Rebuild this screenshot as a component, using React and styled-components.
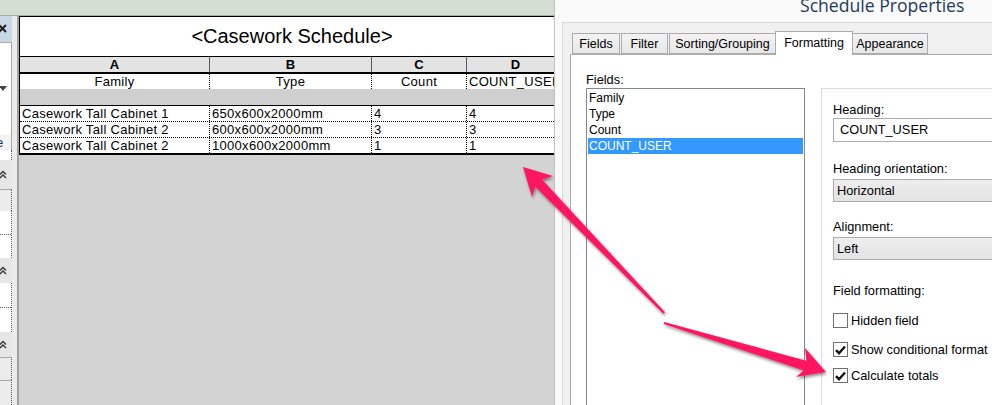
import React from 'react';
import styled, { createGlobalStyle, css } from 'styled-components';

const GlobalStyle = createGlobalStyle`
  html, body {
    margin: 0;
    padding: 0;
    background: #fafafa;
    overflow: hidden;
  }
  * {
    box-sizing: border-box;
  }
`;

const Screen = styled.div`
  position: relative;
  display: flex;
  width: 992px;
  height: 405px;
  overflow: hidden;
  font-family: 'Liberation Sans', Arial, sans-serif;
  color: #000;
`;

/* ---------- left: the schedule view ---------- */

const ViewPane = styled.div`
  display: flex;
  flex-direction: column;
  width: 555px;
  flex-shrink: 0;
  border-right: 1px solid #c2c2c2;
  background: #d3d3d3;
  overflow: hidden;
`;

const TopBand = styled.div`
  height: 16px;
  flex-shrink: 0;
  background: #d5dfd1;
  border-bottom: 1px solid #a6ada3;
`;

const ViewBody = styled.div`
  display: flex;
  flex: 1;
  min-height: 0;
`;

const SideStrip = styled.div`
  display: flex;
  width: 19px;
  flex-shrink: 0;
  background: #ebebeb;
  border-right: 2px solid #a3a3a3;
`;

const Palette = styled.div`
  display: flex;
  flex-direction: column;
  width: 12px;
  overflow: hidden;
`;

const tones = {
  blue: css`
    background: #c9d8e7;
  `,
  plain: css`
    background: #fff;
    border-top: 1px solid #a9a9a9;
    border-right: 1px solid #a9a9a9;
  `,
  light: css`
    background: #f3f3f3;
    border-right: 1px solid #a9a9a9;
  `,
  white: css`
    background: #fff;
    border-right: 1px dotted #5a5a5a;
  `,
  head: css`
    background: #e6e6e6;
  `,
  button: css`
    background: #ececec;
    border-top: 1px solid #a8a8a8;
    border-right: 1px dotted #5a5a5a;
  `,
};

const PaletteBlock = styled.div`
  display: flex;
  flex-direction: column;
  justify-content: ${(p) => p.$justify || 'center'};
  height: ${(p) => p.$h}px;
  flex-shrink: 0;
  ${(p) => tones[p.$tone]}
`;

const Half = styled.div`
  flex: 1;
  & + & {
    border-top: 1px dotted #5a5a5a;
  }
`;

const Frag = styled.span`
  margin-left: -4px;
  font-size: 13px;
  line-height: 13px;
  color: #1b2f5a;
`;

const Schedule = styled.div`
  flex: 1;
  display: flex;
  flex-direction: column;
  background: #d3d3d3;
  overflow: hidden;
`;

const SchedTable = styled.div`
  width: 545px;
  background: #fff;
  border-left: 1px solid #000;
`;

const SchedTitle = styled.div`
  height: 41px;
  display: flex;
  align-items: center;
  justify-content: center;
  border-top: 1px solid #000;
  border-bottom: 1px solid #000;
  font-size: 20px;
`;

const SchedRow = styled.div`
  display: grid;
  grid-template-columns: 190px 162px 95px 98px;
  height: ${(p) => p.$h}px;
  background: ${(p) => p.$bg || '#fff'};
  border-bottom: ${(p) => p.$rule || 'none'};
`;

const Cell = styled.div`
  border-right: ${(p) => p.$sep || 'none'};
  padding: 0 2px;
  line-height: 15px;
  font-size: 13px;
  font-weight: ${(p) => (p.$bold ? 700 : 400)};
  letter-spacing: ${(p) => (p.$bold ? 0 : 0.3)}px;
  text-align: ${(p) => p.$align || 'left'};
  white-space: nowrap;
  overflow: hidden;
`;

/* ---------- right: Schedule Properties dialog ---------- */

const Dialog = styled.div`
  flex: 1;
  min-width: 0;
  display: flex;
  flex-direction: column;
  background: #fafafa;
  overflow: hidden;
`;

const TitleBar = styled.div`
  height: 22px;
  flex-shrink: 0;
  padding-left: 245px;
  overflow: hidden;
`;

const Title = styled.div`
  margin-top: -3px;
  font-family: 'Open Sans', sans-serif;
  font-size: 17.6px;
  line-height: 17px;
  color: #1d3a5c;
  white-space: nowrap;
`;

const Client = styled.div`
  flex: 1;
  display: flex;
  flex-direction: column;
  margin-left: 7px;
  padding: 8px 0 0 7px;
  background: #f0f0f0;
  border-top: 1px solid #d9d9d9;
  border-left: 1px solid #d9d9d9;
`;

const TabStrip = styled.div`
  position: relative;
  z-index: 1;
  display: flex;
  align-items: flex-end;
  gap: 1px;
  height: 23px;
  flex-shrink: 0;
  padding-left: 2px;
`;

const Tab = styled.div`
  width: ${(p) => p.$w}px;
  height: ${(p) => (p.$active ? 24 : 21)}px;
  margin: ${(p) => (p.$active ? '0 -2px -1px -2px' : '0')};
  display: flex;
  align-items: center;
  justify-content: center;
  padding-bottom: ${(p) => (p.$active ? 2 : 0)}px;
  border: 1px solid #acacac;
  border-bottom: ${(p) => (p.$active ? 'none' : '1px solid #acacac')};
  background: ${(p) =>
    p.$active ? '#fff' : 'linear-gradient(#f3f3f3, #e7e7e7)'};
  font-size: 12.5px;
  white-space: nowrap;
`;

const TabPanel = styled.div`
  flex: 1;
  display: grid;
  grid-template-columns: 219px 240px;
  grid-template-rows: auto 1fr;
  column-gap: 16px;
  padding: 17px 0 0 15px;
  background: #fff;
  border-top: 1px solid #acacac;
  border-left: 1px solid #acacac;
`;

const Label = styled.div`
  margin-top: ${(p) => p.$mt || 0}px;
  font-size: 12.8px;
  line-height: 15px;
  white-space: nowrap;
`;

const FieldList = styled.div`
  grid-column: 1;
  grid-row: 2;
  height: 330px;
  margin-top: 1px;
  padding: 1px;
  border: 1px solid #828790;
`;

const FieldItem = styled.div`
  height: 16px;
  padding-left: 1px;
  line-height: 16px;
  font-size: 12px;
  background: ${(p) => (p.$selected ? '#3399ff' : 'transparent')};
  color: ${(p) => (p.$selected ? '#fff' : '#000')};
`;

const Group = styled.div`
  grid-column: 2;
  grid-row: 2;
  display: flex;
  flex-direction: column;
  margin-top: 1px;
  padding: 13px 0 0 11px;
  border: 1px solid #dcdcdc;
`;

const TextBox = styled.div`
  height: 24px;
  margin-top: 1px;
  padding-left: 6px;
  line-height: 22px;
  font-size: 12.8px;
  border: 1px solid #abadb3;
  background: #fff;
`;

const Select = styled.div`
  height: 23px;
  margin-top: 3px;
  padding-left: 3px;
  line-height: 21px;
  font-size: 12.8px;
  border: 1px solid #acacac;
  background: linear-gradient(#eeeeee, #e3e3e3);
`;

const CheckRow = styled.div`
  display: flex;
  align-items: center;
  gap: 3px;
  margin-top: ${(p) => p.$mt}px;
  font-size: 12.8px;
  line-height: 15px;
  white-space: nowrap;
`;

const Box = styled.div`
  width: 15px;
  height: 15px;
  flex-shrink: 0;
  display: flex;
  align-items: center;
  justify-content: center;
  border: 1px solid #707070;
  background: #fff;
`;

const ArrowLayer = styled.svg`
  position: absolute;
  left: 0;
  top: 0;
  pointer-events: none;
`;

function Chevrons() {
  return (
    <svg width='7' height='9' viewBox='0 0 7 9'>
      <path
        d='M0 4.5 L3 1.5 L6 4.5 M0 8 L3 5 L6 8'
        fill='none'
        stroke='#333'
        strokeWidth='1.3'
      />
    </svg>
  );
}

function Checkbox({ checked, label, mt }) {
  return (
    <CheckRow $mt={mt}>
      <Box>
        {checked && (
          <svg width='11' height='10' viewBox='0 0 11 10'>
            <path
              d='M1 5.2 L4 8.2 L10 1.5'
              fill='none'
              stroke='#111'
              strokeWidth='2.4'
            />
          </svg>
        )}
      </Box>
      {label}
    </CheckRow>
  );
}

const rows = [
  ['Casework Tall Cabinet 1', '650x600x2000mm', '4', '4'],
  ['Casework Tall Cabinet 2', '600x600x2000mm', '3', '3'],
  ['Casework Tall Cabinet 2', '1000x600x2000mm', '1', '1'],
];

const solidSep = '1px solid #5a5a5a';
const dotSep = '1px dotted #000';

function App() {
  return (
    <Screen>
      <GlobalStyle />

      <ViewPane>
        <TopBand />
        <ViewBody>
          <SideStrip>
            <Palette>
              <PaletteBlock $h={26} $tone='blue'>
                <svg width='12' height='10' viewBox='0 0 12 10'>
                  <path d='M-1 1 L6 8 M6 1 L-1 8' stroke='#222' strokeWidth='2' />
                </svg>
              </PaletteBlock>
              <PaletteBlock $h={93} $tone='plain'>
                <svg width='12' height='6' viewBox='0 0 12 6'>
                  <polygon points='-1,0 7,0 3,5' fill='#444' />
                </svg>
              </PaletteBlock>
              <PaletteBlock $h={15} $tone='light'>
                <Frag>e</Frag>
              </PaletteBlock>
              <PaletteBlock $h={10} $tone='white' />
              <PaletteBlock $h={29} $tone='head'>
                <Chevrons />
              </PaletteBlock>
              <PaletteBlock $h={22} $tone='button' />
              <PaletteBlock $h={47} $tone='white'>
                <Half />
                <Half />
              </PaletteBlock>
              <PaletteBlock $h={25} $tone='head'>
                <Chevrons />
              </PaletteBlock>
              <PaletteBlock $h={49} $tone='white'>
                <Half />
                <Half />
              </PaletteBlock>
              <PaletteBlock $h={25} $tone='head'>
                <Chevrons />
              </PaletteBlock>
              <PaletteBlock $h={23} $tone='button' />
              <PaletteBlock $h={25} $tone='button' />
            </Palette>
          </SideStrip>

          <Schedule>
            <SchedTable>
              <SchedTitle>&lt;Casework Schedule&gt;</SchedTitle>

              <SchedRow $h={17} $bg='#e3e3e3' $rule='2px solid #000'>
                {['A', 'B', 'C', 'D'].map((l) => (
                  <Cell key={l} $bold $align='center' $sep={solidSep}>
                    {l}
                  </Cell>
                ))}
              </SchedRow>

              <SchedRow $h={15}>
                <Cell $align='center' $sep={dotSep}>Family</Cell>
                <Cell $align='center' $sep={dotSep}>Type</Cell>
                <Cell $align='center' $sep={dotSep}>Count</Cell>
                <Cell>COUNT_USER</Cell>
              </SchedRow>

              <SchedRow $h={17} $bg='#cfcfcf' $rule='1px solid #000' />

              {rows.map((r, i) => (
                <SchedRow
                  key={i}
                  $h={i === rows.length - 1 ? 17 : 16}
                  $rule={i === rows.length - 1 ? '2px solid #000' : dotSep}
                >
                  <Cell $sep={dotSep}>{r[0]}</Cell>
                  <Cell $sep={dotSep}>{r[1]}</Cell>
                  <Cell $sep={dotSep}>{r[2]}</Cell>
                  <Cell>{r[3]}</Cell>
                </SchedRow>
              ))}
            </SchedTable>
          </Schedule>
        </ViewBody>
      </ViewPane>

      <Dialog>
        <TitleBar>
          <Title>Schedule Properties</Title>
        </TitleBar>
        <Client>
          <TabStrip>
            <Tab $w={48}>Fields</Tab>
            <Tab $w={47}>Filter</Tab>
            <Tab $w={107}>Sorting/Grouping</Tab>
            <Tab $w={78} $active>Formatting</Tab>
            <Tab $w={76}>Appearance</Tab>
          </TabStrip>

          <TabPanel>
            <Label>Fields:</Label>
            <FieldList>
              <FieldItem>Family</FieldItem>
              <FieldItem>Type</FieldItem>
              <FieldItem>Count</FieldItem>
              <FieldItem $selected>COUNT_USER</FieldItem>
            </FieldList>

            <Group>
              <Label>Heading:</Label>
              <TextBox>COUNT_USER</TextBox>

              <Label $mt={19}>Heading orientation:</Label>
              <Select>Horizontal</Select>

              <Label $mt={17}>Alignment:</Label>
              <Select>Left</Select>

              <Label $mt={23}>Field formatting:</Label>
              <Checkbox mt={15} label='Hidden field' />
              <Checkbox mt={14} checked label='Show conditional format' />
              <Checkbox mt={11} checked label='Calculate totals' />
            </Group>
          </TabPanel>
        </Client>
      </Dialog>

      <ArrowLayer width='992' height='405' viewBox='0 0 992 405'>
        <defs>
          <filter id='shadow' x='-20%' y='-20%' width='140%' height='140%'>
            <feDropShadow dx='1' dy='2' stdDeviation='1.5' floodColor='#000' floodOpacity='0.45' />
          </filter>
        </defs>
        <g fill='#fe1761' filter='url(#shadow)'>
          <polygon points='523,167 553,176 542,179.5 665,312.3 663.3,313.7 535,186.5 532,197' />
          <polygon points='826,372 805,348 806.4,360.8 664.3,322 663.7,324 803.5,370.4 796,377' />
        </g>
      </ArrowLayer>
    </Screen>
  );
}

export default App;
